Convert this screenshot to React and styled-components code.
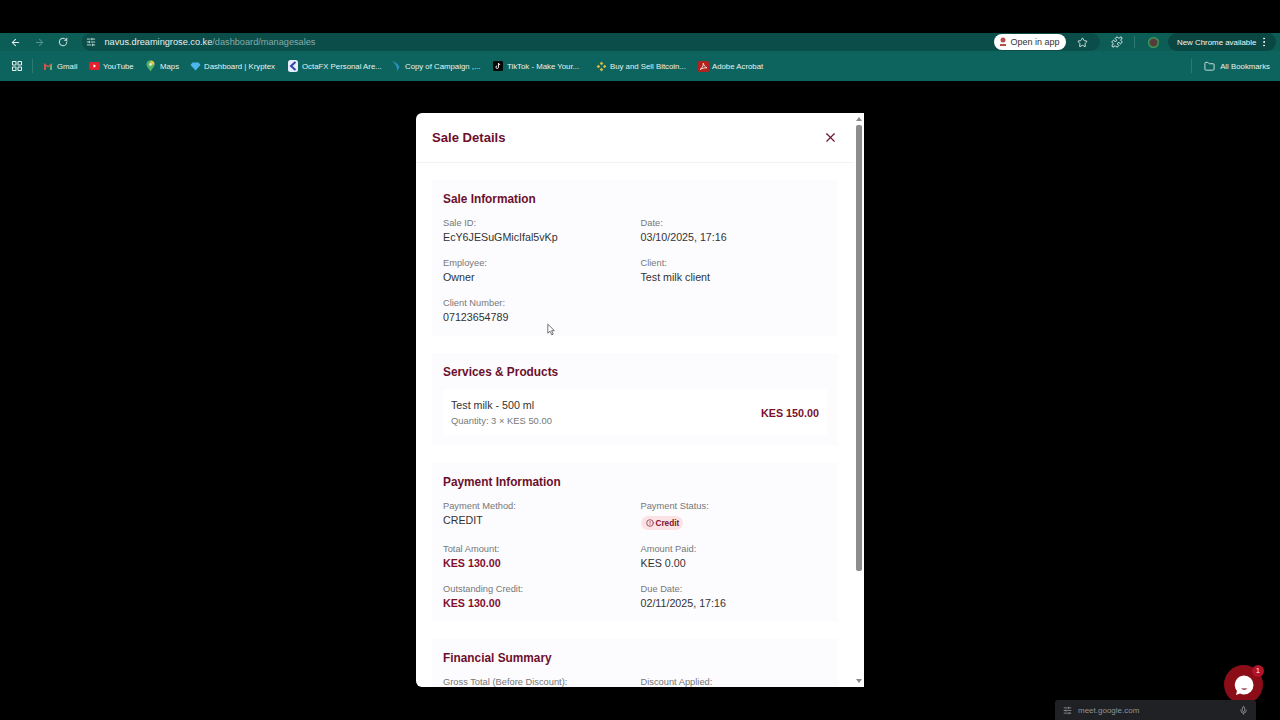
import React from 'react'
import styled, { createGlobalStyle } from 'styled-components'
import { ArrowLeft, ArrowRight, RotateCw, SlidersHorizontal, Star, Puzzle, EllipsisVertical, LayoutGrid, Folder, X, CircleAlert, Mic } from 'lucide-react'

const GlobalStyle = createGlobalStyle`
    html, body {
        margin: 0;
        padding: 0;
        background: #000;
    }
    * {
        box-sizing: border-box;
    }
`

const bookmarks = [
    { label: 'Gmail', color: '#d9534f', width: 46 },
    { label: 'YouTube', color: '#e5202e', width: 57 },
    { label: 'Maps', color: '#58b368', width: 44 },
    { label: 'Dashboard | Kryptex', color: '#4db6f0', width: 98 },
    { label: 'OctaFX Personal Are...', color: '#e8ecff', width: 103 },
    { label: 'Copy of Campaign ,...', color: '#2a8fc0', width: 102 },
    { label: 'TikTok - Make Your...', color: '#050505', width: 103 },
    { label: 'Buy and Sell Bitcoin...', color: '#d8b93c', width: 102 },
    { label: 'Adobe Acrobat', color: '#b3221f', width: 70 },
]

const Favicon = ({ index }) => {
    const c = bookmarks[index].color
    if (index === 0) return (
        <svg width="10" height="10" viewBox="0 0 10 10">
            <path d="M1 9V2l4 3 4-3v7H7V5L5 6.500 3 5v4z" fill={c} />
            <path d="M7 9V5l2-2v6z" fill="#6fb36a" />
        </svg>
    )
    if (index === 1) return (
        <svg width="11" height="10" viewBox="0 0 11 10">
            <rect y="1" width="11" height="8" rx="2" fill={c} />
            <path d="M4.500 3.200 7.200 5 4.500 6.800z" fill="#fff" />
        </svg>
    )
    if (index === 2) return (
        <svg width="9" height="12" viewBox="0 0 9 12">
            <path d="M4.500 0.500a4 4 0 0 1 4 4c0 2.500-2.500 4-4 7-1.500-3-4-4.500-4-7a4 4 0 0 1 4-4z" fill={c} />
            <path d="M4.500 0.500a4 4 0 0 1 4 4l-4 .5z" fill="#e8c14a" />
            <circle cx="4.500" cy="4.500" r="1.400" fill="#d5e9e0" />
        </svg>
    )
    if (index === 3) return (
        <svg width="11" height="9" viewBox="0 0 11 9">
            <path d="M2.500 0.500h6l2 2.500-5 5.500-5-5.500z" fill={c} />
        </svg>
    )
    if (index === 4) return (
        <svg width="10" height="12" viewBox="0 0 10 12">
            <rect width="10" height="12" rx="2.500" fill={c} />
            <path d="M7.500 2 3 6l4.500 4" fill="none" stroke="#2d46a8" strokeWidth="2" />
        </svg>
    )
    if (index === 5) return (
        <svg width="10" height="12" viewBox="0 0 10 12">
            <path d="M0.500 1C4 1.500 7 4 8.500 7L6 11.500C6.500 7 4.500 3.500 0.500 1z" fill={c} />
        </svg>
    )
    if (index === 6) return (
        <svg width="10" height="10" viewBox="0 0 11 11">
            <rect width="11" height="11" rx="1.500" fill={c} />
            <path d="M6 2.200v4.600a1.400 1.400 0 1 1-1.400-1.400M6 2.400c.2 1 .9 1.500 1.900 1.600" fill="none" stroke="#fff" strokeWidth="1" />
        </svg>
    )
    if (index === 7) return (
        <svg width="11" height="11" viewBox="0 0 12 12">
            <path d="M6 .6 8 2.600 6 4.600 4 2.600zM2.600 4 4.600 6 2.600 8 .6 6zM9.400 4 11.400 6 9.400 8 7.400 6zM6 7.400 8 9.400 6 11.400 4 9.400z" fill={c} />
        </svg>
    )
    return (
        <svg width="11" height="11" viewBox="0 0 11 11">
            <rect width="11" height="11" rx="1.500" fill={c} />
            <path d="M2 8.500c2-1 3.500-4 3.300-6.300.6 2.500 1.800 4 3.700 4.600-2.400-.1-4.800.5-7 1.700z" fill="none" stroke="#fff" strokeWidth=".8" />
        </svg>
    )
}

const Browser = () => (
    <BrowserCon>
        <AddressRow>
            <NavBtn><ArrowLeft size={11} color="#e4f0ee" strokeWidth={2.2} /></NavBtn>
            <NavBtn><ArrowRight size={11} color="#4f938b" strokeWidth={2.2} /></NavBtn>
            <NavBtn><RotateCw size={10} color="#e4f0ee" strokeWidth={2.2} /></NavBtn>
            <Omnibox>
                <SiteIcon><SlidersHorizontal size={10} color="#d9e8e5" /></SiteIcon>
                <Url>navus.dreamingrose.co.ke<span>/dashboard/managesales</span></Url>
                <OpenApp>
                    <svg width="8" height="10" viewBox="0 0 8 10">
                        <circle cx="4" cy="3" r="2.500" fill="#b5504a" />
                        <rect x="1" y="7" width="6" height="2" fill="#b5504a" />
                    </svg>
                    Open in app
                </OpenApp>
                <StarBtn><Star size={11} color="#dcebe8" /></StarBtn>
            </Omnibox>
            <ToolIcon><Puzzle size={12} color="#e4f0ee" /></ToolIcon>
            <Divider />
            <Avatar />
            <UpdatePill>
                New Chrome available
                <EllipsisVertical size={12} color="#fff" />
            </UpdatePill>
        </AddressRow>
        <BookmarksRow>
            <AppsBtn><LayoutGrid size={12} color="#e4f0ee" strokeWidth={2.2} /></AppsBtn>
            <Divider $short />
            <BookmarkList>
                {bookmarks.map((b, i) => (
                    <Bookmark key={b.label} $width={b.width}>
                        <IconSlot><Favicon index={i} /></IconSlot>
                        {b.label}
                    </Bookmark>
                ))}
            </BookmarkList>
            <AllBookmarks>
                <Divider $short />
                <Folder size={11} color="#d9e8e5" />
                All Bookmarks
            </AllBookmarks>
        </BookmarksRow>
    </BrowserCon>
)

const Field = ({ label, children, accent }) => (
    <div>
        <FieldLabel>{label}:</FieldLabel>
        <FieldValue $accent={accent}>{children}</FieldValue>
    </div>
)

const Modal = () => (
    <ModalCon>
        <ModalMain>
            <ModalHead>
                <ModalTitle>Sale Details</ModalTitle>
                <X size={15} color="#6d0f2c" strokeWidth={1.8} />
            </ModalHead>
            <ModalBody>
                <Section>
                    <SectionTitle>Sale Information</SectionTitle>
                    <FieldGrid>
                        <Field label="Sale ID">EcY6JESuGMicIfal5vKp</Field>
                        <Field label="Date">03/10/2025, 17:16</Field>
                        <Field label="Employee">Owner</Field>
                        <Field label="Client">Test milk client</Field>
                        <Field label="Client Number">07123654789</Field>
                    </FieldGrid>
                </Section>
                <Section>
                    <SectionTitle>Services &amp; Products</SectionTitle>
                    <ItemRow>
                        <div>
                            <ItemName>Test milk - 500 ml</ItemName>
                            <ItemQty>Quantity: 3 × KES 50.00</ItemQty>
                        </div>
                        <ItemPrice>KES 150.00</ItemPrice>
                    </ItemRow>
                </Section>
                <Section>
                    <SectionTitle>Payment Information</SectionTitle>
                    <FieldGrid>
                        <Field label="Payment Method">CREDIT</Field>
                        <div>
                            <FieldLabel>Payment Status:</FieldLabel>
                            <Badge><CircleAlert size={8} strokeWidth={2} />Credit</Badge>
                        </div>
                        <Field label="Total Amount" accent>KES 130.00</Field>
                        <Field label="Amount Paid">KES 0.00</Field>
                        <Field label="Outstanding Credit" accent>KES 130.00</Field>
                        <Field label="Due Date">02/11/2025, 17:16</Field>
                    </FieldGrid>
                </Section>
                <Section>
                    <SectionTitle>Financial Summary</SectionTitle>
                    <FieldGrid>
                        <FieldLabel>Gross Total (Before Discount):</FieldLabel>
                        <FieldLabel>Discount Applied:</FieldLabel>
                    </FieldGrid>
                </Section>
            </ModalBody>
        </ModalMain>
        <ScrollTrack>
            <ScrollArrow />
            <ScrollThumb />
            <ScrollArrow $down />
        </ScrollTrack>
    </ModalCon>
)

const App = () => (
    <Page>
        <GlobalStyle />
        <Browser />
        <Stage>
            <Modal />
        </Stage>
        <Cursor width="9" height="13" viewBox="0 0 11 15">
            <path d="M1 1v11l2.800-2.400L5.800 14l1.800-.8-2-4.300H9z" fill="#fff" stroke="#555" strokeWidth="1" />
        </Cursor>
        <ChatBubble>
            <svg width="24" height="24" viewBox="0 0 24 24">
                <path d="M12 2.500a9.500 9.500 0 0 1 0 19c-1.500 0-2.800-.3-4-.9L4 22l1-4A9.500 9.500 0 0 1 12 2.500z" fill="#fff" />
                <path d="M9 15.500c2 1.600 4.400 1.600 6.500 0z" fill="#7a0a1c" />
            </svg>
            <ChatCount>1</ChatCount>
        </ChatBubble>
        <MeetBar>
            <SlidersHorizontal size={9} color="#9aa0a3" />
            <MeetUrl>meet.google.com</MeetUrl>
            <Mic size={9} color="#9aa0a3" />
        </MeetBar>
    </Page>
)

const Page = styled.div`
    width: 1280px;
    height: 720px;
    background: #000;
    padding-top: 33px;
    display: flex;
    flex-direction: column;
    position: relative;
    overflow: hidden;
    font-family: "Liberation Sans", Arial, sans-serif;
`

const BrowserCon = styled.div`
    flex: none;
    height: 48px;
    display: flex;
    flex-direction: column;
    background: #0d645e;
`

const AddressRow = styled.div`
    flex: none;
    height: 18px;
    display: flex;
    align-items: center;
    padding: 0 4px 0 3px;
    background: #0d5d57;
`

const NavBtn = styled.div`
    width: 24px;
    display: flex;
    justify-content: center;
`

const Omnibox = styled.div`
    flex: 1;
    height: 18px;
    margin-left: 7px;
    display: flex;
    align-items: center;
    border-radius: 10px;
    background: #0b4d49;
    padding-left: 3px;
`

const SiteIcon = styled.div`
    width: 12px;
    display: flex;
    justify-content: center;
    margin-right: 7.500px;
`

const Url = styled.div`
    flex: 1;
    font-size: 9.200px;
    color: #e6f0ee;
    span {
        color: #86aca8;
    }
`

const OpenApp = styled.div`
    height: 16px;
    width: 72px;
    display: flex;
    align-items: center;
    gap: 4px;
    padding-left: 5px;
    background: #fff;
    border-radius: 8px;
    font-size: 9px;
    color: #333;
    white-space: nowrap;
`

const StarBtn = styled.div`
    width: 34px;
    display: flex;
    justify-content: center;
`

const ToolIcon = styled.div`
    width: 34px;
    display: flex;
    justify-content: center;
`

const Divider = styled.div`
    width: 1px;
    height: ${props => (props.$short ? '14px' : '12px')};
    background: #2a7a74;
    flex: none;
`

const Avatar = styled.div`
    flex: none;
    width: 11px;
    height: 11px;
    margin: 0 9.500px 0 13px;
    border-radius: 50%;
    background: radial-gradient(circle, #553b3b 40%, #3bae57 70%);
`

const UpdatePill = styled.div`
    flex: none;
    height: 18px;
    width: 108px;
    display: flex;
    align-items: center;
    gap: 2px;
    padding-left: 9px;
    border-radius: 10px;
    background: #0a4743;
    color: #f2f7f6;
    font-size: 7.900px;
    white-space: nowrap;
`

const BookmarksRow = styled.div`
    flex: 1;
    display: flex;
    align-items: center;
    padding: 0 10px 0 11px;
`

const AppsBtn = styled.div`
    width: 12px;
    margin-right: 9px;
    display: flex;
`

const BookmarkList = styled.div`
    display: flex;
    margin-left: 10px;
`

const Bookmark = styled.div`
    display: flex;
    align-items: center;
    width: ${props => props.$width}px;
    font-size: 7.800px;
    color: #e8f2f0;
    white-space: nowrap;
`

const IconSlot = styled.span`
    flex: none;
    width: 14px;
    display: flex;
    align-items: center;
`

const AllBookmarks = styled.div`
    margin-left: auto;
    display: flex;
    align-items: center;
    gap: 5px;
    font-size: 7.800px;
    color: #e8f2f0;
    white-space: nowrap;
    svg {
        margin-left: 7px;
    }
`

const Stage = styled.div`
    flex: 1;
    display: flex;
    justify-content: center;
    align-items: flex-start;
    padding-top: 32px;
`

const ModalCon = styled.div`
    width: 448px;
    height: 574px;
    display: flex;
    background: #fff;
    border-radius: 6px 0 0 6px;
    overflow: hidden;
`

const ModalMain = styled.div`
    flex: 1;
    min-width: 0;
    display: flex;
    flex-direction: column;
`

const ModalHead = styled.div`
    flex: none;
    height: 50px;
    display: flex;
    align-items: center;
    justify-content: space-between;
    padding: 0 16.500px 0 16px;
    border-bottom: 1px solid #f3f3f5;
`

const ModalTitle = styled.h2`
    margin: 0;
    font-size: 13.100px;
    font-weight: 700;
    color: #6d0f2c;
`

const ModalBody = styled.div`
    flex: 1;
    min-height: 0;
    overflow: hidden;
    padding: 17px 0 0 16px;
`

const Section = styled.section`
    width: 406px;
    padding: 9px 11px 11px;
    margin-bottom: 17px;
    background: #fcfcfe;
`

const SectionTitle = styled.h3`
    margin: 0 0 8px;
    font-size: 11.850px;
    line-height: 20px;
    font-weight: 700;
    color: #6d0f2c;
`

const FieldGrid = styled.div`
    display: grid;
    grid-template-columns: 197.500px 1fr;
    row-gap: 12px;
`

const FieldLabel = styled.div`
    font-size: 9.300px;
    line-height: 13px;
    color: #777;
`

const FieldValue = styled.div`
    font-size: 10.700px;
    line-height: 15px;
    color: ${props => (props.$accent ? '#7f0f30' : '#333')};
    font-weight: ${props => (props.$accent ? 700 : 400)};
`

const Badge = styled.span`
    display: inline-flex;
    align-items: center;
    gap: 2px;
    height: 14px;
    margin-top: 3px;
    padding: 0 4px 0 5px;
    border-radius: 7px;
    background: #fbe3e5;
    color: #7b0f2e;
    font-size: 8.200px;
    font-weight: 700;
`

const ItemRow = styled.div`
    display: flex;
    align-items: center;
    justify-content: space-between;
    height: 45px;
    padding: 0 8px;
    background: #fff;
`

const ItemName = styled.div`
    font-size: 10.700px;
    line-height: 15px;
    color: #333;
`

const ItemQty = styled.div`
    font-size: 9.400px;
    line-height: 15px;
    color: #777;
`

const ItemPrice = styled.div`
    font-size: 10.750px;
    font-weight: 700;
    color: #7b0f2e;
`

const ScrollTrack = styled.div`
    flex: none;
    width: 10px;
    display: flex;
    flex-direction: column;
    align-items: center;
    background: #fff;
`

const ScrollArrow = styled.div`
    flex: none;
    width: 0;
    height: 0;
    margin: ${props => (props.$down ? 'auto 0 4px' : '4px 0 0')};
    border-left: 3.500px solid transparent;
    border-right: 3.500px solid transparent;
    border-bottom: ${props => (props.$down ? '0' : '4px solid #8a8a8a')};
    border-top: ${props => (props.$down ? '4px solid #8a8a8a' : '0')};
`

const ScrollThumb = styled.div`
    flex: none;
    width: 6px;
    height: 446px;
    margin-top: 4px;
    background: #8d8d8d;
    border-radius: 2px;
`

const Cursor = styled.svg`
    position: absolute;
    left: 547px;
    top: 323px;
`

const ChatBubble = styled.div`
    position: absolute;
    left: 1224px;
    top: 665px;
    width: 39px;
    height: 39px;
    display: flex;
    align-items: center;
    justify-content: center;
    border-radius: 50%;
    background: #8b0d18;
`

const ChatCount = styled.span`
    position: absolute;
    right: -1px;
    top: 0;
    width: 12px;
    height: 12px;
    border-radius: 50%;
    background: #b3122a;
    color: #fff;
    font-size: 7px;
    line-height: 12px;
    text-align: center;
`

const MeetBar = styled.div`
    position: absolute;
    left: 1055px;
    top: 700px;
    width: 201px;
    height: 20px;
    display: flex;
    align-items: center;
    padding: 0 8px;
    gap: 6px;
    border-radius: 3px 3px 0 0;
    background: #202124;
`

const MeetUrl = styled.span`
    flex: 1;
    font-size: 8px;
    color: #8f9497;
`

export default App
